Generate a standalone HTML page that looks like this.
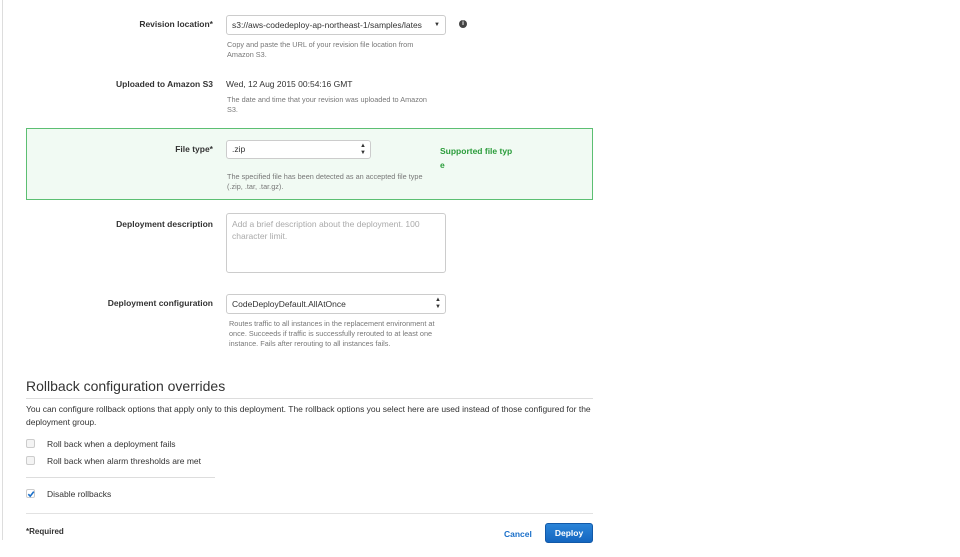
<!DOCTYPE html>
<html><head><meta charset="utf-8"><style>
body{margin:0;width:960px;height:557px;background:#fff;font-family:"Liberation Sans",Arial,sans-serif;position:relative;overflow:hidden;color:#333}
.a{position:absolute;white-space:nowrap}
.lbl{font-size:8.5px;font-weight:bold;color:#333;text-align:right;width:200px}
.help{font-size:7.3px;color:#777;line-height:10px;white-space:normal}
.box{position:absolute;border:1px solid #ccc;border-radius:3px;background:#fff;box-sizing:border-box;font-size:8.5px;color:#333;padding-left:5px}
.cb{position:absolute;width:9px;height:9px;border:1px solid #ccc;border-radius:2px;background:#f4f4f4;box-sizing:border-box}
.t{font-size:8.5px;color:#333}
</style></head><body>
<div class="a" style="left:2px;top:0;width:1px;height:540px;background:#ddd"></div>

<div class="a lbl" style="left:13px;top:19px">Revision location*</div>
<div class="box" style="left:226px;top:15px;width:220px;height:20px;line-height:18px">s3://aws-codedeploy-ap-northeast-1/samples/lates<span style="position:absolute;right:5px;font-size:6px">▼</span></div>
<div class="a" style="left:459px;top:20px;width:8px;height:8px;border-radius:50%;background:#444;color:#fff;font-size:6.5px;font-weight:bold;text-align:center;line-height:8px">i</div>
<div class="a help" style="left:227px;top:40px;width:212px">Copy and paste the URL of your revision file location from Amazon S3.</div>

<div class="a lbl" style="left:13px;top:79px">Uploaded to Amazon S3</div>
<div class="a t" style="left:226px;top:79px">Wed, 12 Aug 2015 00:54:16 GMT</div>
<div class="a help" style="left:227px;top:95px;width:212px">The date and time that your revision was uploaded to Amazon S3.</div>

<div class="a" style="left:26px;top:128px;width:567px;height:72px;border:1px solid #5cbf72;background:#f1faf3;box-sizing:border-box"></div>
<div class="a lbl" style="left:13px;top:144px">File type*</div>
<div class="box" style="left:226px;top:140px;width:145px;height:19px;line-height:17px">.zip<span style="position:absolute;right:4px;font-size:6px;line-height:7px;top:2px">▲<br>▼</span></div>
<div class="a" style="left:440px;top:144px;font-size:8.5px;font-weight:bold;color:#2a9c3a;line-height:14px">Supported file typ<br>e</div>
<div class="a help" style="left:227px;top:172px;width:212px">The specified file has been detected as an accepted file type (.zip, .tar, .tar.gz).</div>

<div class="a lbl" style="left:13px;top:219px">Deployment description</div>
<div class="box" style="left:226px;top:213px;width:220px;height:60px;padding:4px 5px;font-size:8.5px;color:#aaa;line-height:12px">Add a brief description about the deployment. 100 character limit.</div>

<div class="a lbl" style="left:13px;top:298px">Deployment configuration</div>
<div class="box" style="left:226px;top:294px;width:220px;height:20px;line-height:18px">CodeDeployDefault.AllAtOnce<span style="position:absolute;right:4px;font-size:6px;line-height:7px;top:2px">▲<br>▼</span></div>
<div class="a help" style="left:229px;top:319px;width:212px">Routes traffic to all instances in the replacement environment at once. Succeeds if traffic is successfully rerouted to at least one instance. Fails after rerouting to all instances fails.</div>

<div class="a" style="left:26px;top:378px;font-size:14px;color:#333">Rollback configuration overrides</div>
<div class="a" style="left:26px;top:398px;width:567px;height:1px;background:#ddd"></div>
<div class="a" style="left:26px;top:403px;width:578px;font-size:8.5px;line-height:13px;white-space:normal;color:#333">You can configure rollback options that apply only to this deployment. The rollback options you select here are used instead of those configured for the deployment group.</div>
<div class="cb" style="left:26px;top:439px"></div><div class="a t" style="left:47px;top:439px">Roll back when a deployment fails</div>
<div class="cb" style="left:26px;top:456px"></div><div class="a t" style="left:47px;top:456px">Roll back when alarm thresholds are met</div>
<div class="a" style="left:26px;top:477px;width:189px;height:1px;background:#ddd"></div>
<div class="cb" style="left:26px;top:489px;background:#fff"></div>
<svg class="a" style="left:27px;top:490px" width="8" height="8" viewBox="0 0 8 8"><path d="M1.3 4.2 L3.2 6.2 L6.8 1.6" fill="none" stroke="#1a6fc9" stroke-width="1.6"/></svg>
<div class="a t" style="left:47px;top:489px">Disable rollbacks</div>
<div class="a" style="left:26px;top:513px;width:567px;height:1px;background:#e2e2e2"></div>
<div class="a" style="left:26px;top:527px;font-size:8px;font-weight:bold;color:#333">*Required</div>
<div class="a" style="left:504px;top:529px;font-size:8.5px;font-weight:bold;color:#1a6fc9">Cancel</div>
<div class="a" style="left:545px;top:523px;width:48px;height:20px;border-radius:3px;background:linear-gradient(#2b84d8,#1466c0);border:1px solid #1259a8;box-sizing:border-box;color:#fff;font-size:8.5px;font-weight:bold;text-align:center;line-height:18px">Deploy</div>
</body></html>
